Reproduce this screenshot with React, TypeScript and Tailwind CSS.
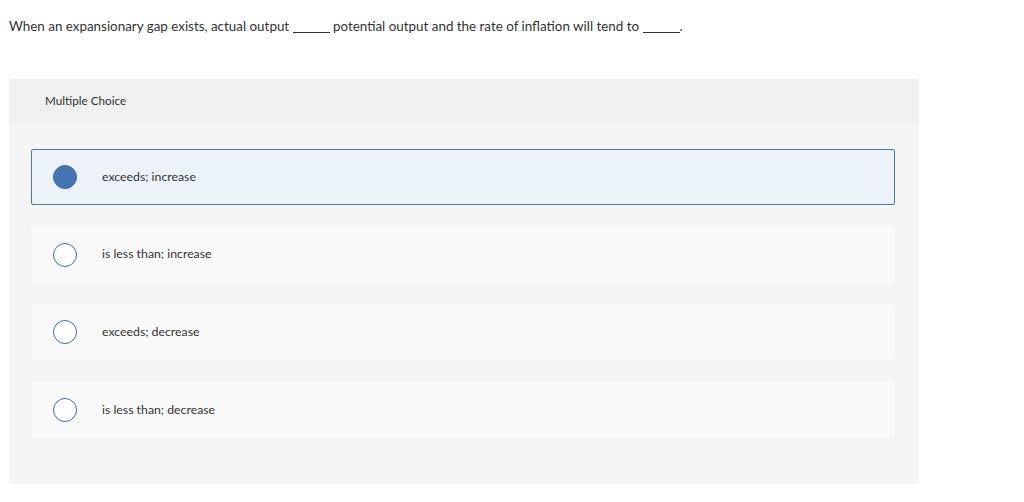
const options = [
  { id: 'a', label: 'exceeds; increase', selected: true },
  { id: 'b', label: 'is less than; increase', selected: false },
  { id: 'c', label: 'exceeds; decrease', selected: false },
  { id: 'd', label: 'is less than; decrease', selected: false },
]

const Blank = () => (
  <span className='inline-block w-[37px] border-b border-[#333] align-[-2px]' />
)

export default function App() {
  return (
    <div className="w-[1024px] h-[502px] bg-white text-[#333] font-['Lato',_'Liberation_Sans',_sans-serif]">
      <p className='pt-[18px] pl-[9px] text-[13.4px] leading-[16px]'>
        When an expansionary gap exists, actual output <Blank /> potential output and the rate of inflation will tend to <Blank />.
      </p>

      <div className='ml-[9px] mt-[45px] w-[910px] h-[405px] rounded-[3px] bg-[#f5f5f5] overflow-hidden'>
        <div className='h-[43px] bg-[#f0f0f0] flex items-center pl-[36px] text-[11.7px]'>Multiple Choice</div>
        <div className='flex flex-col gap-[21.7px] pt-[27px] pl-[22px] w-[886px]'>
          {options.map((opt) => (
            <div
              key={opt.id}
              className={
                opt.selected
                  ? 'h-[56px] flex items-center rounded-[2px] border border-[#4a78b8] bg-[#ebf2fa]'
                  : 'h-[56px] flex items-center rounded-[2px] border border-transparent bg-[#fafafa]'
              }
            >
              <span
                className={
                  opt.selected
                    ? 'ml-[21px] w-[24px] h-[24px] rounded-full bg-[#4774b3] border border-[#3f6aa6]'
                    : 'ml-[21px] w-[24px] h-[24px] rounded-full bg-white border border-[#3f6aa6]'
                }
              />
              <span className='ml-[25px] text-[12.3px]'>{opt.label}</span>
            </div>
          ))}
        </div>
      </div>
    </div>
  )
}
